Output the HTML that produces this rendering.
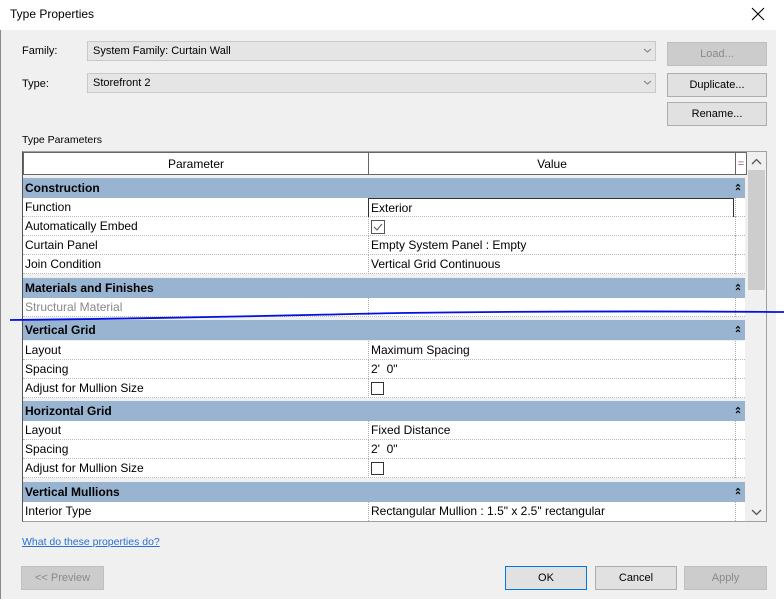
<!DOCTYPE html>
<html><head><style>
*{margin:0;padding:0;box-sizing:border-box}
body{width:784px;height:599px;background:#fff;font-family:"Liberation Sans",sans-serif;font-size:11px;color:#000;position:relative;overflow:hidden}
.a{position:absolute}
.dlg{left:0;top:0;width:776px;height:599px;background:#f0f0f0;border-left:1px solid #888}
.title{left:0;top:0;width:784px;height:30px;background:#fff}
.combo{background:#e5e5e5;border:1px solid #c8c8c8;height:20px;padding:3px 0 0 5px}
.btn{background:#e1e1e1;border:1px solid #adadad;text-align:center;height:24px;line-height:22px}
.dis{background:#cccccc;border-color:#bfbfbf;color:#8a8a8a}
.band{background:#99b4d1;left:23px;width:722px;height:20px;font-weight:bold;font-size:12px;padding:3px 0 0 2px}
.row{left:23px;width:722px;height:19px;background:#fff;border-bottom:1px dotted #bbb;font-size:12px}
.row .p{position:absolute;left:2px;top:2px}
.row .v{position:absolute;left:345px;top:0;height:19px;border-left:1px dotted #aaa;padding:2px 0 0 2px;width:367px}
.row .e{position:absolute;left:712px;top:0;height:19px;border-left:1px dotted #aaa}
.chev{position:absolute;right:4px;top:5px}
.cb{display:inline-block;width:13px;height:13px;border:1px solid #333;background:#fff;margin-top:1px}
</style></head><body>
<div class="a dlg"></div>
<div class="a title"></div>
<div class="a" style="left:10px;top:7px;font-size:12px">Type Properties</div>
<svg class="a" style="left:751px;top:7px" width="14" height="14"><path d="M1 1L13 13M13 1L1 13" stroke="#000" stroke-width="1.1"/></svg>

<div class="a" style="left:22px;top:45px">Family:</div>
<div class="a combo" style="left:87px;top:41px;width:569px">System Family: Curtain Wall</div>
<div class="a" style="left:22px;top:78px">Type:</div>
<div class="a combo" style="left:87px;top:73px;width:569px">Storefront 2</div>
<svg class="a" style="left:643px;top:48px" width="9" height="6"><path d="M1 1L4.5 4L8 1" stroke="#777" fill="none"/></svg>
<svg class="a" style="left:643px;top:80px" width="9" height="6"><path d="M1 1L4.5 4L8 1" stroke="#777" fill="none"/></svg>
<div class="a btn dis" style="left:667px;top:42px;width:100px">Load...</div>
<div class="a btn" style="left:667px;top:73px;width:100px">Duplicate...</div>
<div class="a btn" style="left:667px;top:102px;width:100px">Rename...</div>

<div class="a" style="left:22px;top:134px;font-size:10.5px">Type Parameters</div>

<div class="a" style="left:22px;top:151px;width:745px;height:371px;background:#f0f0f0;border:1px solid #a0a0a0;border-left:1px solid #555"></div>
<div class="a" style="left:23px;top:152px;width:346px;height:23px;background:#fff;border:1px solid #666;text-align:center;line-height:22px;font-size:12px">Parameter</div>
<div class="a" style="left:368px;top:152px;width:368px;height:23px;background:#fff;border:1px solid #666;text-align:center;line-height:22px;font-size:12px">Value</div>
<div class="a" style="left:735px;top:152px;width:12px;height:23px;background:#fff;border:1px solid #666;text-align:center;line-height:22px;font-size:11px;color:#a56">=</div>
<div class="a" style="left:747px;top:152px;width:19px;height:369px;background:#f0f0f0"></div>
<div class="a" style="left:748px;top:170px;width:17px;height:120px;background:#cdcdcd"></div>
<svg class="a" style="left:751px;top:158px" width="11" height="7"><path d="M1 6L5.5 1.5L10 6" stroke="#555" fill="none" stroke-width="1.3"/></svg>
<svg class="a" style="left:751px;top:509px" width="11" height="7"><path d="M1 1L5.5 5.5L10 1" stroke="#555" fill="none" stroke-width="1.3"/></svg>

<div class="a band" style="top:178px">Construction<svg class="chev" width="6" height="8"><path d="M1 3.5L3 1.5L5 3.5M1 7L3 5L5 7" stroke="#000" fill="none" stroke-width="1.2"/></svg></div>
<div class="a row" style="top:198px"><span class="p">Function</span><span class="v" style="border:1px solid #333;left:345px;width:366px;height:20px;top:0">Exterior</span><span class="e"></span></div>
<div class="a row" style="top:217px"><span class="p">Automatically Embed</span><span class="v"><svg width="14" height="14" style="margin-top:1px"><rect x=".5" y=".5" width="13" height="13" fill="#fff" stroke="#555"/><path d="M3 7L6 10L11 4" stroke="#555" fill="none"/></svg></span><span class="e"></span></div>
<div class="a row" style="top:236px"><span class="p">Curtain Panel</span><span class="v">Empty System Panel : Empty</span><span class="e"></span></div>
<div class="a row" style="top:255px"><span class="p">Join Condition</span><span class="v">Vertical Grid Continuous</span><span class="e"></span></div>
<div class="a band" style="top:278px">Materials and Finishes<svg class="chev" width="6" height="8"><path d="M1 3.5L3 1.5L5 3.5M1 7L3 5L5 7" stroke="#000" fill="none" stroke-width="1.2"/></svg></div>
<div class="a row" style="top:298px;color:#888"><span class="p">Structural Material</span><span class="v"></span><span class="e"></span></div>
<div class="a band" style="top:320px">Vertical Grid<svg class="chev" width="6" height="8"><path d="M1 3.5L3 1.5L5 3.5M1 7L3 5L5 7" stroke="#000" fill="none" stroke-width="1.2"/></svg></div>
<div class="a row" style="top:341px"><span class="p">Layout</span><span class="v">Maximum Spacing</span><span class="e"></span></div>
<div class="a row" style="top:360px"><span class="p">Spacing</span><span class="v">2'&nbsp; 0"</span><span class="e"></span></div>
<div class="a row" style="top:379px"><span class="p">Adjust for Mullion Size</span><span class="v"><span class="cb"></span></span><span class="e"></span></div>
<div class="a band" style="top:401px">Horizontal Grid<svg class="chev" width="6" height="8"><path d="M1 3.5L3 1.5L5 3.5M1 7L3 5L5 7" stroke="#000" fill="none" stroke-width="1.2"/></svg></div>
<div class="a row" style="top:421px"><span class="p">Layout</span><span class="v">Fixed Distance</span><span class="e"></span></div>
<div class="a row" style="top:440px"><span class="p">Spacing</span><span class="v">2'&nbsp; 0"</span><span class="e"></span></div>
<div class="a row" style="top:459px"><span class="p">Adjust for Mullion Size</span><span class="v"><span class="cb"></span></span><span class="e"></span></div>
<div class="a band" style="top:482px">Vertical Mullions<svg class="chev" width="6" height="8"><path d="M1 3.5L3 1.5L5 3.5M1 7L3 5L5 7" stroke="#000" fill="none" stroke-width="1.2"/></svg></div>
<div class="a row" style="top:502px;border-bottom:none"><span class="p">Interior Type</span><span class="v">Rectangular Mullion : 1.5" x 2.5" rectangular</span><span class="e"></span></div>

<svg class="a" style="left:0;top:305px" width="784" height="20"><path d="M10 15 C200 13 300 10 400 8 C550 6 650 6 784 7" stroke="#0010e0" stroke-width="1.8" fill="none"/></svg>

<div class="a" style="left:22px;top:536px;color:#2a6fd4;text-decoration:underline;font-size:10.5px">What do these properties do?</div>
<div class="a btn dis" style="left:21px;top:566px;width:83px">&lt;&lt; Preview</div>
<div class="a btn" style="left:505px;top:566px;width:82px;border:1px solid #0078d7">OK</div>
<div class="a btn" style="left:595px;top:566px;width:82px">Cancel</div>
<div class="a btn dis" style="left:684px;top:566px;width:83px">Apply</div>
</body></html>
